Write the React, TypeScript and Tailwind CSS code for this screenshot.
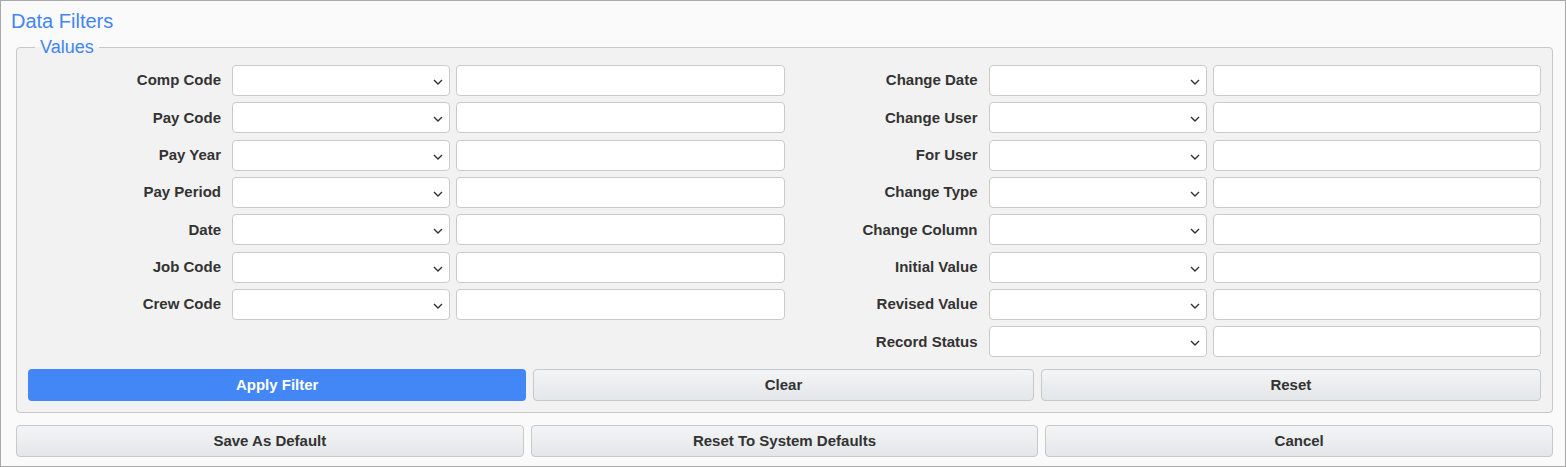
import React from "react";

const left = ["Comp Code", "Pay Code", "Pay Year", "Pay Period", "Date", "Job Code", "Crew Code"];
const right = [
  "Change Date",
  "Change User",
  "For User",
  "Change Type",
  "Change Column",
  "Initial Value",
  "Revised Value",
  "Record Status",
];

function Chevron() {
  return (
    <svg width="10" height="6" viewBox="0 0 10 6" className="absolute right-[6px] top-[13px]">
      <path d="M1 1 L5 5 L9 1" fill="none" stroke="#333" strokeWidth="1.4" />
    </svg>
  );
}

function Row({ label }: { label: string }) {
  return (
    <div className="flex items-center h-[31px]">
      <div className="w-[193px] text-right text-[15px] font-bold text-[#333] whitespace-nowrap">{label}</div>
      <div className="relative ml-[11px] w-[218px] h-[31px] bg-white border border-[#cacaca] rounded-[4px]">
        <Chevron />
      </div>
      <div className="ml-[6px] flex-1 h-[31px] bg-white border border-[#cacaca] rounded-[4px]" />
    </div>
  );
}

function GrayButton({ children }: { children: React.ReactNode }) {
  return (
    <button className="flex-1 h-[32px] rounded-[4px] border border-[#c8c8c8] bg-linear-to-b from-[#f3f4f5] to-[#e4e7ea] text-[15px] font-bold text-[#333]">
      {children}
    </button>
  );
}

export default function App() {
  return (
    <div
      className="w-[1566px] h-[467px] bg-[#fafafa] border border-[#a9a9a9] flex flex-col"
      style={{ fontFamily: '"Liberation Sans", Arial, sans-serif' }}
    >
      <div className="pl-[10px] pt-[9px] h-[35px] text-[20px] leading-[22px] text-[#4285f4]">Data Filters</div>
      <fieldset className="ml-[15px] mr-[12px] border border-[#c8c8c8] rounded-[4px] bg-[#f2f2f2] px-[11px] pt-[7px] pb-[11px]">
        <legend className="ml-[7px] px-[5px] text-[18px] leading-[22px] text-[#4285f4]">Values</legend>
        <div className="flex">
          <div className="flex-1 flex flex-col gap-y-[6.34px]">
            {left.map((l) => (
              <Row key={l} label={l} />
            ))}
          </div>
          <div className="flex-1 flex flex-col gap-y-[6.34px]">
            {right.map((l) => (
              <Row key={l} label={l} />
            ))}
          </div>
        </div>
        <div className="flex gap-[7px] mt-[12px]">
          <button className="flex-1 h-[32px] rounded-[4px] bg-[#4287f5] text-[15px] font-bold text-white">
            Apply Filter
          </button>
          <GrayButton>Clear</GrayButton>
          <GrayButton>Reset</GrayButton>
        </div>
      </fieldset>
      <div className="flex gap-[7px] ml-[15px] mr-[12px] mt-[12px]">
        <GrayButton>Save As Default</GrayButton>
        <GrayButton>Reset To System Defaults</GrayButton>
        <GrayButton>Cancel</GrayButton>
      </div>
    </div>
  );
}
